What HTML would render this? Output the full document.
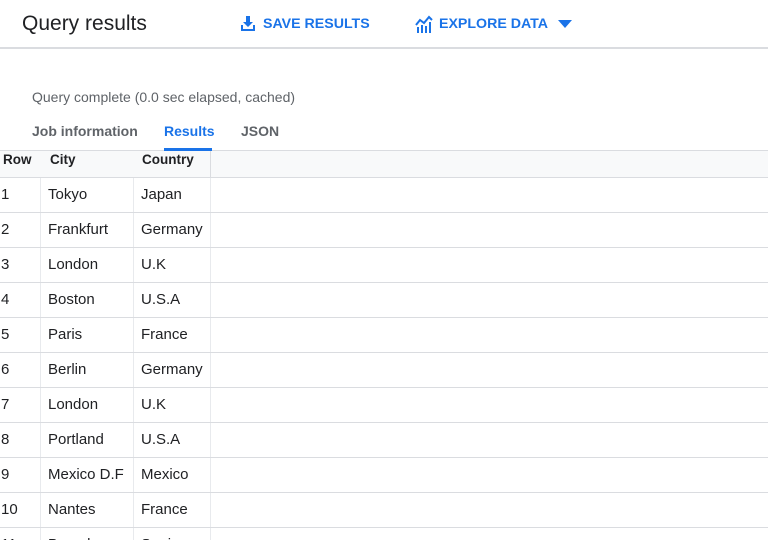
<!DOCTYPE html>
<html><head><style>
body{margin:0;width:768px;height:547px;overflow:hidden;background:#fff;font-family:"Liberation Sans",Arial,sans-serif;position:relative}
.title{position:absolute;left:22px;top:12px;font-size:21px;color:#202124}
.btn{position:absolute;top:16px;font-size:14.2px;color:#1a73e8;font-weight:bold;letter-spacing:0px}
.hl{position:absolute;left:0;top:47px;width:768px;height:2px;background:#dadce0}
.status{position:absolute;left:32px;top:89px;font-size:14px;color:#5f6368}
.tab{position:absolute;top:123px;font-size:14px;font-weight:bold;color:#5f6368}
.tabline{position:absolute;left:164px;top:148px;width:48px;height:3px;background:#1a73e8}
.thead{position:absolute;left:0;top:150px;width:768px;height:26px;background:#f8f9fa;border-top:1px solid #dadce0;border-bottom:1px solid #dadce0}
.th{position:absolute;top:152px;font-size:13.5px;font-weight:bold;color:#202124}
.wrap{position:absolute;left:0;top:178px;width:768px;height:362px;overflow:hidden}
.row{position:relative;height:34px;border-bottom:1px solid #dadce0;font-size:15px;color:#202124}
.row span{position:absolute;top:8px}
.v{position:absolute;top:0;bottom:0;width:1px;background:#e8eaed}
</style></head><body>
<div class="title">Query results</div>
<svg style="position:absolute;left:240px;top:15px" width="16" height="17" viewBox="0 0 16 17"><path d="M6 1h4v6h3l-5 5-5-5h3z" fill="#1a73e8"/><path d="M1 10v6h14v-6h-2v4H3v-4z" fill="#1a73e8"/></svg>
<div class="btn" style="left:263px">SAVE RESULTS</div>
<svg style="position:absolute;left:415px;top:15px" width="18" height="18" viewBox="0 0 18 18"><path d="M1 10l4-5 4 3 5-6 3 3" stroke="#1a73e8" stroke-width="2" fill="none"/><rect x="2" y="12" width="2" height="6" fill="#1a73e8"/><rect x="6" y="10" width="2" height="8" fill="#1a73e8"/><rect x="10" y="11" width="2" height="7" fill="#1a73e8"/><rect x="14" y="7" width="2" height="11" fill="#1a73e8"/></svg>
<div class="btn" style="left:439px">EXPLORE DATA</div>
<svg style="position:absolute;left:558px;top:20px" width="14" height="8"><path d="M0 0h14L7 8z" fill="#1a73e8"/></svg>
<div class="hl"></div>
<div class="status">Query complete (0.0 sec elapsed, cached)</div>
<div class="tab" style="left:32px">Job information</div>
<div class="tab" style="left:164px;color:#1a73e8">Results</div>
<div class="tab" style="left:241px">JSON</div>
<div class="thead"></div>
<div class="tabline"></div>
<div class="th" style="left:3px">Row</div>
<div class="th" style="left:50px">City</div>
<div class="th" style="left:142px">Country</div>
<div class="v" style="left:210px;top:151px;height:27px;bottom:auto;position:absolute;background:#dadce0"></div>
<div class="wrap">
<div class="v" style="left:40px"></div><div class="v" style="left:133px"></div><div class="v" style="left:210px"></div>
<div class="row"><span style="left:1px">1</span><span style="left:48px">Tokyo</span><span style="left:141px">Japan</span></div>
<div class="row"><span style="left:1px">2</span><span style="left:48px">Frankfurt</span><span style="left:141px">Germany</span></div>
<div class="row"><span style="left:1px">3</span><span style="left:48px">London</span><span style="left:141px">U.K</span></div>
<div class="row"><span style="left:1px">4</span><span style="left:48px">Boston</span><span style="left:141px">U.S.A</span></div>
<div class="row"><span style="left:1px">5</span><span style="left:48px">Paris</span><span style="left:141px">France</span></div>
<div class="row"><span style="left:1px">6</span><span style="left:48px">Berlin</span><span style="left:141px">Germany</span></div>
<div class="row"><span style="left:1px">7</span><span style="left:48px">London</span><span style="left:141px">U.K</span></div>
<div class="row"><span style="left:1px">8</span><span style="left:48px">Portland</span><span style="left:141px">U.S.A</span></div>
<div class="row"><span style="left:1px">9</span><span style="left:48px">Mexico D.F</span><span style="left:141px">Mexico</span></div>
<div class="row"><span style="left:1px">10</span><span style="left:48px">Nantes</span><span style="left:141px">France</span></div>
<div class="row"><span style="left:1px">11</span><span style="left:48px">Barcelona</span><span style="left:141px">Spain</span></div>
</div>
</body></html>
